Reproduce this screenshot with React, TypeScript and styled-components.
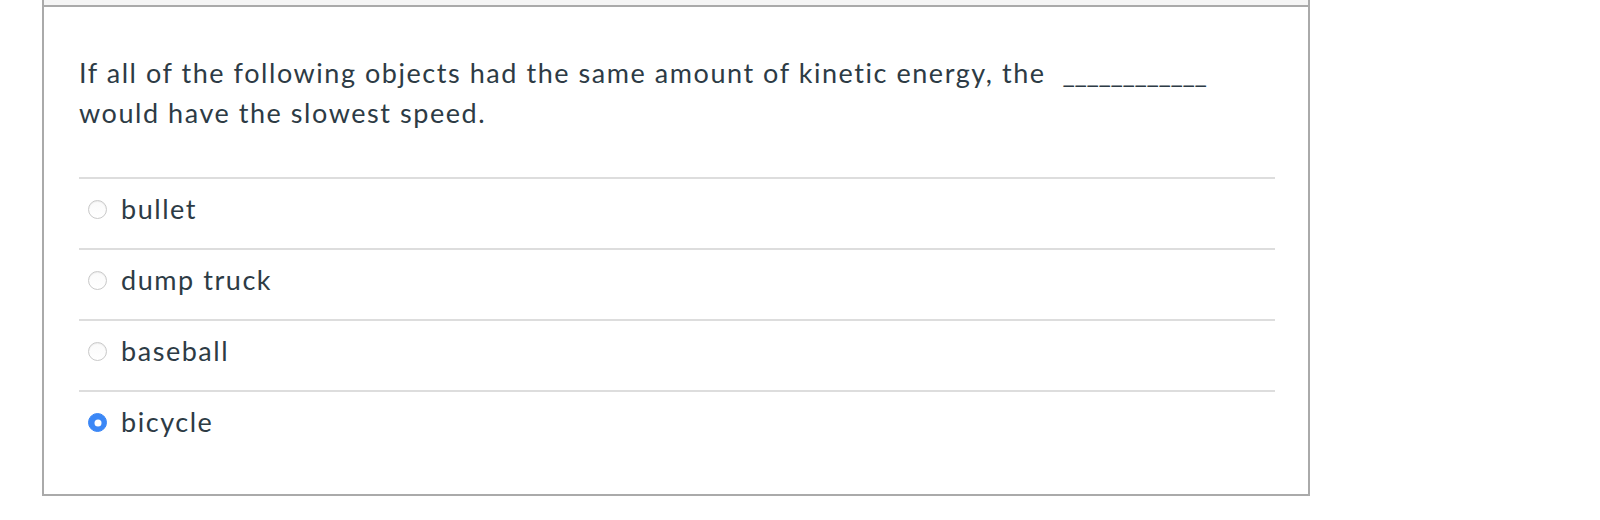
import React, { useState } from 'react';
import styled, { createGlobalStyle } from 'styled-components';

const GlobalStyle = createGlobalStyle`
  html, body {
    margin: 0;
    padding: 0;
    background: #ffffff;
  }
  body {
    font-family: Lato, 'Open Sans', sans-serif;
    color: #2d3b45;
  }
`;

const Page = styled.div`
  width: 1600px;
  height: 520px;
  padding-left: 42px;
  box-sizing: border-box;
`;

const QuestionCard = styled.section`
  width: 1268px;
  box-sizing: border-box;
  border: 2px solid #aaaaaa;
  border-top: none;
  background: #ffffff;
`;

const CardHeader = styled.div`
  height: 5px;
  background: #f5f5f5;
  border-bottom: 2px solid #aaaaaa;
`;

const CardBody = styled.div`
  padding: 46px 33px 33px 35px;
`;

const QuestionText = styled.p`
  margin: 0 0 44px;
  font-size: 27px;
  line-height: 40px;
  letter-spacing: 1.55px;
`;

const Blank = styled.span`
  margin-left: 17px;
  letter-spacing: -0.4px;
`;

const AnswerList = styled.ul`
  list-style: none;
  margin: 0;
  padding: 0;
`;

const AnswerRow = styled.li`
  height: 71px;
  box-sizing: border-box;
  border-top: 2px solid #dddddd;
  padding: 0 0 8px 9px;
  display: flex;
  align-items: center;
  gap: 14px;
  cursor: pointer;
`;

const Radio = styled.span<{ $checked: boolean }>`
  width: 19px;
  height: 19px;
  border-radius: 50%;
  box-sizing: border-box;
  flex-shrink: 0;
  position: relative;
  background: ${(p) => (p.$checked ? '#3b87f6' : 'linear-gradient(#fafafa, #ffffff)')};
  border: 1px solid ${(p) => (p.$checked ? '#3b87f6' : '#c9c9c9')};
  box-shadow: ${(p) => (p.$checked ? 'none' : 'inset 0 1px 1px rgba(0,0,0,0.06)')};

  &::after {
    content: '';
    display: ${(p) => (p.$checked ? 'block' : 'none')};
    position: absolute;
    width: 7px;
    height: 7px;
    border-radius: 50%;
    background: #ffffff;
    top: 50%;
    left: 50%;
    transform: translate(-50%, -50%);
  }
`;

const AnswerLabel = styled.span`
  font-size: 27px;
  line-height: 40px;
  letter-spacing: 1.55px;
  padding-bottom: 2px;
`;

const answers = ['bullet', 'dump truck', 'baseball', 'bicycle'];

const App = () => {
  const [selected, setSelected] = useState('bicycle');

  return (
    <>
      <GlobalStyle />
      <Page>
        <QuestionCard>
          <CardHeader />
          <CardBody>
            <QuestionText>
              If all of the following objects had the same amount of kinetic energy, the
              <Blank>____________</Blank>
              <br />
              would have the slowest speed.
            </QuestionText>
            <AnswerList>
              {answers.map((answer) => (
                <AnswerRow key={answer} onClick={() => setSelected(answer)}>
                  <Radio $checked={selected === answer} />
                  <AnswerLabel>{answer}</AnswerLabel>
                </AnswerRow>
              ))}
            </AnswerList>
          </CardBody>
        </QuestionCard>
      </Page>
    </>
  );
};

export default App;
